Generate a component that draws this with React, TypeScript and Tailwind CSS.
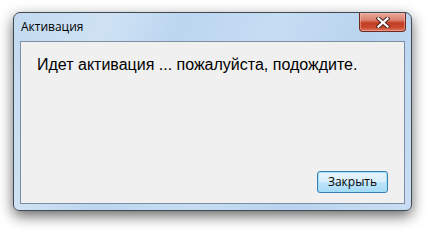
import React from "react";

export default function App() {
  return (
    <div className="w-[430px] h-[231px] bg-white pt-[12px] pl-[13px]">
      <div
        className="w-[399px] h-[199px] rounded-t-[7px] rounded-b-[6px] border border-[#3f4a55] shadow-[0_5px_14px_rgba(0,0,0,0.6)] flex flex-col px-[6px] pb-[6px]"
        style={{
          background:
            "linear-gradient(115deg, #c2d9ef 0%, #cfe2f4 20%, #bcd6f0 35%, #c6ddf3 55%, #b9d3ee 75%, #c9def3 100%)",
        }}
      >
        <div className="h-[28px] flex justify-between shrink-0">
          <div
            className="ml-[1px] h-full flex items-center text-[12px] text-black"
            style={{ fontFamily: "'Open Sans', 'Noto Sans', sans-serif" }}
          >
            Активация
          </div>
          <div
            className="w-[47px] h-[19px] -mr-[1px] rounded-b-[4px] border border-t-0 border-[#6e2a20] flex items-center justify-center shadow-[inset_0_0_0_1px_rgba(255,200,190,0.45)]"
            style={{
              background:
                "linear-gradient(180deg, #e9a99b 0%, #d9806c 40%, #c23e24 55%, #c9492e 80%, #de7b5f 100%)",
            }}
          >
            <svg width="14" height="11" viewBox="0 0 14 11">
              <path d="M2.5 1.5 L11.5 9.5 M11.5 1.5 L2.5 9.5" stroke="#4a2620" strokeWidth="4.2" strokeLinecap="square" />
              <path d="M2.5 1.5 L11.5 9.5 M11.5 1.5 L2.5 9.5" stroke="#ffffff" strokeWidth="2.2" strokeLinecap="square" />
            </svg>
          </div>
        </div>
        <div className="flex-1 border border-[#7d8ea0] bg-[#f0f0f0] flex flex-col pl-[16px] pr-[16px] pb-[10px]">
          <div
            className="mt-[13px] text-[16px] leading-[20px] text-black"
            style={{ fontFamily: "'Liberation Sans', Arial, sans-serif" }}
          >
            Идет активация ... пожалуйста, подождите.
          </div>
          <div className="flex-1" />
          <div className="flex justify-end">
            <div
              className="w-[71px] h-[22px] rounded-[3px] border border-[#3c7fb1] flex items-center justify-center text-[12px] text-black shadow-[inset_0_0_0_1px_#9fe0fa]"
              style={{
                background:
                  "linear-gradient(180deg, #e5f4fc 0%, #d9effb 48%, #bee6fd 52%, #a7d9f5 100%)",
                fontFamily: "'Open Sans', 'Noto Sans', sans-serif",
              }}
            >
              Закрыть
            </div>
          </div>
        </div>
      </div>
    </div>
  );
}
